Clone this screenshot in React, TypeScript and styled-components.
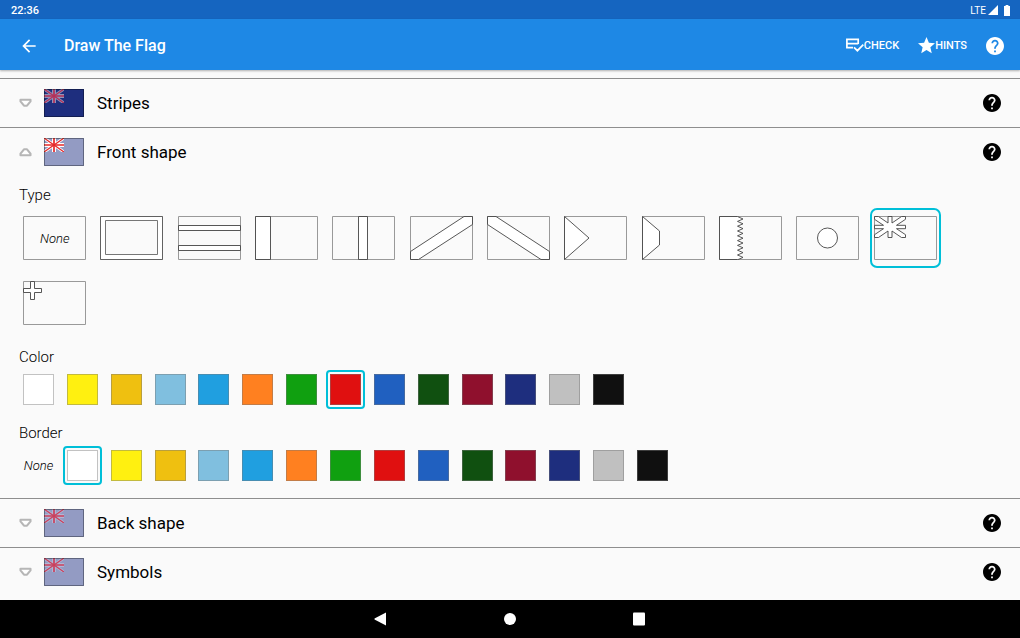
import React, { useState } from 'react';
import styled, { createGlobalStyle } from 'styled-components';

const GlobalStyle = createGlobalStyle`
  * { box-sizing: border-box; }
  body {
    margin: 0;
    background: #fafafa;
    color: #000;
    font-family: Roboto, "Liberation Sans", sans-serif;
  }
  button, input { font: inherit; margin: 0; }
`;

const Screen = styled.div`
  display: flex;
  flex-direction: column;
  min-height: 100vh;
`;

const StatusBar = styled.div`
  display: flex;
  align-items: center;
  justify-content: space-between;
  height: 19px;
  padding: 1px 10px 0 11px;
  background: #1565c0;
  color: #fff;
  font-size: 11px;
  font-weight: 500;
`;

const StatusIcons = styled.div`
  display: flex;
  align-items: center;
  gap: 2px;
  font-size: 10px;
  font-weight: 400;
`;

const AppBar = styled.header`
  display: flex;
  align-items: center;
  height: 51px;
  padding: 2px 16px 0 19px;
  background: #1e88e5;
  color: #fff;
  box-shadow: 0 1px 2px rgba(0, 0, 0, 0.3);
  z-index: 1;
`;

const PlainButton = styled.button`
  display: flex;
  align-items: center;
  padding: 0;
  border: 0;
  background: none;
  color: inherit;
  cursor: pointer;
`;

const Title = styled.h1`
  flex: 1;
  margin: 0 0 0 25px;
  font-size: 16px;
  font-weight: 500;
`;

const Actions = styled.div`
  display: flex;
  align-items: center;
  gap: 19px;
  font-size: 11px;
  font-weight: 500;
`;

const Content = styled.main`
  flex: 1;
  padding-top: 8px;
`;

const SectionHeader = styled.div`
  display: flex;
  align-items: center;
  height: 49px;
  padding: 0 19px;
  border-top: 1px solid #8e8e8e;
  color: #000;
`;

const Toggle = styled(PlainButton)`
  flex: 1;
  height: 48px;
  gap: 12px;
  text-align: left;
`;

const SectionTitle = styled.span`
  padding-left: 1px;
  font-size: 17px;
  font-weight: 400;
`;

const SectionBody = styled.div`
  display: flex;
  flex-direction: column;
  gap: 14px;
  padding: 9px 20px 13px 19px;
`;

const Group = styled.fieldset`
  margin: 0;
  padding: 0;
  border: 0;
  min-width: 0;
`;

const Legend = styled.legend`
  padding: 0;
  height: 23px;
  line-height: 20px;
  font-size: 15px;
  font-weight: 300;
`;

const TypeGrid = styled.div`
  display: grid;
  grid-template-columns: repeat(auto-fill, minmax(71px, 1fr));
  gap: 5px 6px;
  margin-right: 59px;
`;

const SwatchGrid = styled.div`
  display: grid;
  grid-template-columns: repeat(auto-fill, minmax(38px, 1fr));
  gap: 5px;
  max-width: 653px;
`;

const Choice = styled.label<{ $height: number }>`
  display: grid;
  place-items: center;
  height: ${(p) => p.$height}px;
  cursor: pointer;
  > * { grid-area: 1 / 1; }
`;

const Radio = styled.input`
  appearance: none;
  width: 100%;
  height: 100%;
  border-radius: ${(p) => (p.name === 'type' ? 7 : 4)}px;
  &:checked { border: 2px solid #00bfd8; }
`;

const Swatch = styled.span<{ $color: string }>`
  width: 31px;
  height: 31px;
  border: 1px solid rgba(120, 120, 120, 0.45);
  background: ${(p) => p.$color};
`;

const None = styled.span`
  font-size: 13px;
  font-style: italic;
  font-weight: 300;
`;

const NavBar = styled.nav`
  display: flex;
  align-items: center;
  justify-content: center;
  gap: 115px;
  height: 38px;
  background: #000;
  color: #fff;
`;

const colors: [string, string][] = [
  ['White', '#ffffff'], ['Yellow', '#fff010'], ['Gold', '#efc010'], ['Sky', '#80bfdf'],
  ['Azure', '#209fe0'], ['Orange', '#ff8020'], ['Green', '#10a010'], ['Red', '#e01010'],
  ['Blue', '#2060c0'], ['Dark green', '#105010'], ['Maroon', '#8f102d'], ['Navy', '#1e2e7e'],
  ['Silver', '#c0c0c0'], ['Black', '#101010'],
];

const zigzag = 'M18.5 .5' + Array.from({ length: 9 }, (_, i) =>
  `L24 ${3 + i * 4.8}L18.5 ${5.4 + i * 4.8}`).join('') + 'L18.5 43.5';

const union =
  'M0 0H4L13.5 6.5V0H17.5V6.5L27 0H31V2.8L22 8.8H31V12.2H22L31 18.2V21H27L17.5 14.5V21H13.5V14.5L4 21H0V18.2L9 12.2H0V8.8H9L0 2.8Z';

const types: { name: string; shape: React.ReactNode }[] = [
  { name: 'None', shape: null },
  { name: 'Frame', shape: <><path d="M.5 .5h62v43h-62z" stroke="#555" /><path d="M5.5 4.5h52v34h-52z" fill="#fafafa" stroke="#666" /></> },
  { name: 'Horizontal stripes', shape: <><path d="M.5 9.5h62v5h-62z" /><path d="M.5 29.5h62v5h-62z" /></> },
  { name: 'Side band', shape: <path d="M.5 .5h15v43h-15z" /> },
  { name: 'Middle band', shape: <path d="M26.5 .5h9v43h-9z" /> },
  { name: 'Rising diagonal', shape: <path d="M.5 35.5L54 .5h8.5V8.5L8.5 43.5h-8z" /> },
  { name: 'Falling diagonal', shape: <path d="M62.5 35.5L9 .5H.5V8.5L54 43.5h8.5z" /> },
  { name: 'Triangle', shape: <path d="M.5 .5L25 22L.5 43.5z" /> },
  { name: 'Trapezoid', shape: <path d="M.5 .5L17.5 15V29L.5 43.5z" /> },
  { name: 'Serrated', shape: <path d={`${zigzag}H.5V.5z`} /> },
  { name: 'Disc', shape: <circle cx="31.5" cy="22" r="10" /> },
  { name: 'Union canton', shape: <path d={union} transform="translate(.5 .5)" /> },
  { name: 'Cross canton', shape: <path d="M7.5 .5h4v7h7v4h-7v7h-4v-7h-7v-4h7z" /> },
];

function TypeIcon({ shape }: { shape: React.ReactNode }) {
  return (
    <svg width="63" height="44" viewBox="0 0 63 44" fill="none">
      <path d="M.5 .5h62v43h-62z" stroke="#999" />
      <g fill="#fff" stroke="#444" strokeWidth="0.9">{shape}</g>
    </svg>
  );
}

type FlagLook = 'navy' | 'bright' | 'faded';

function Flag({ look }: { look: FlagLook }) {
  const field = look === 'navy' ? '#1e2e7e' : '#939bc3';
  const white = { navy: '#8d93bb', bright: '#ffffff', faded: '#b0b5d4' }[look];
  const red = { navy: '#b53058', bright: '#e62a2a', faded: '#cb405c' }[look];
  return (
    <svg width="40" height="28" viewBox="0 0 40 28" fill="none">
      <path d="M0 0h40v28H0z" fill={field} />
      <svg width="20" height="14" viewBox="0 0 20 14">
        <path d="M0 0L20 14M20 0L0 14" stroke={white} strokeWidth="3" />
        <path d="M10 0V14M0 7H20" stroke={white} strokeWidth="4" />
        <path d="M0 0L20 14M20 0L0 14" stroke={red} strokeWidth="1.3" />
        <path d="M10 0V14M0 7H20" stroke={red} strokeWidth="1.7" />
      </svg>
      <path d="M.5 .5h39v27H.5z" stroke="#000" strokeOpacity="0.35" />
    </svg>
  );
}

function Arrow({ open }: { open: boolean }) {
  return (
    <svg width="13" height="10" viewBox="0 0 13 10">
      <path
        d={open ? 'M1.5 8.2h10V6.6L8 2.3H5L1.5 6.6z' : 'M1.5 1.8h10v1.6L8 7.7H5L1.5 3.4z'}
        fill="#fff" stroke="#b6b6b6" strokeWidth="2.1" strokeLinejoin="round"
      />
    </svg>
  );
}

function HelpIcon({ size }: { size: number }) {
  return (
    <svg width={size} height={size} viewBox="2 2 20 20" fill="currentColor">
      <path d="M12 2C6.48 2 2 6.48 2 12s4.48 10 10 10 10-4.48 10-10S17.52 2 12 2zm1 17h-2v-2h2v2zm2.07-7.75l-.9.92C13.45 12.9 13 13.5 13 15h-2v-.5c0-1.1.45-2.1 1.17-2.83l1.24-1.26c.37-.36.59-.86.59-1.41 0-1.1-.9-2-2-2s-2 .9-2 2H8c0-2.21 1.79-4 4-4s4 1.79 4 4c0 .88-.36 1.68-.93 2.25z" />
    </svg>
  );
}

function SectionBar({ title, look, open = false }: { title: string; look: FlagLook; open?: boolean }) {
  return (
    <SectionHeader>
      <Toggle type="button" aria-expanded={open}>
        <Arrow open={open} />
        <Flag look={look} />
        <SectionTitle>{title}</SectionTitle>
      </Toggle>
      <PlainButton type="button" aria-label={`Help: ${title}`}>
        <HelpIcon size={18} />
      </PlainButton>
    </SectionHeader>
  );
}

function ColorChoices({ name, initial, allowNone = false }: { name: string; initial: string; allowNone?: boolean }) {
  const [value, setValue] = useState(initial);
  return (
    <SwatchGrid>
      {allowNone && (
        <Choice $height={39}>
          <Radio type="radio" name={name} checked={value === 'None'} onChange={() => setValue('None')} />
          <None>None</None>
        </Choice>
      )}
      {colors.map(([label, color]) => (
        <Choice key={label} $height={39}>
          <Radio type="radio" name={name} aria-label={label} checked={value === label} onChange={() => setValue(label)} />
          <Swatch $color={color} />
        </Choice>
      ))}
    </SwatchGrid>
  );
}

export default function App() {
  const [type, setType] = useState('Union canton');
  return (
    <Screen>
      <GlobalStyle />
      <StatusBar>
        <span>22:36</span>
        <StatusIcons>
          <span>LTE</span>
          <svg width="10" height="10" viewBox="0 0 10 10" fill="#fff"><path d="M10 0V10H0z" /></svg>
          <svg width="10" height="11" viewBox="0 0 10 11" fill="#fff"><path d="M4 1h1.6V0h2.8v1H10v10H4V1z" /></svg>
        </StatusIcons>
      </StatusBar>
      <AppBar>
        <PlainButton type="button" aria-label="Back">
          <svg width="20" height="20" viewBox="0 0 24 24" fill="currentColor">
            <path d="M20 11H7.83l5.59-5.59L12 4l-8 8 8 8 1.41-1.41L7.83 13H20v-2z" />
          </svg>
        </PlainButton>
        <Title>Draw The Flag</Title>
        <Actions>
          <PlainButton type="button">
            <svg width="18" height="15" viewBox="0 0 18 15" fill="none" stroke="#fff" strokeWidth="1.7">
              <path d="M7 9.7H.9V1.4H12.2V6M1 5.6H12.2M8 9.3L11.4 12.7L17.3 6.6" />
            </svg>
            CHECK
          </PlainButton>
          <PlainButton type="button">
            <svg width="17" height="17" viewBox="2 2 20 20" fill="currentColor">
              <path d="M12 17.27L18.18 21l-1.64-7.03L22 9.24l-7.19-.61L12 2 9.19 8.63 2 9.24l5.46 4.73L5.82 21z" />
            </svg>
            HINTS
          </PlainButton>
          <PlainButton type="button" aria-label="Help">
            <HelpIcon size={18} />
          </PlainButton>
        </Actions>
      </AppBar>
      <Content>
        <SectionBar title="Stripes" look="navy" />
        <SectionBar title="Front shape" look="bright" open />
        <SectionBody>
          <Group>
            <Legend>Type</Legend>
            <TypeGrid>
              {types.map((t) => (
                <Choice key={t.name} $height={60}>
                  <Radio type="radio" name="type" aria-label={t.name} checked={type === t.name} onChange={() => setType(t.name)} />
                  <TypeIcon shape={t.shape} />
                  {t.shape === null && <None>None</None>}
                </Choice>
              ))}
            </TypeGrid>
          </Group>
          <Group>
            <Legend>Color</Legend>
            <ColorChoices name="color" initial="Red" />
          </Group>
          <Group>
            <Legend>Border</Legend>
            <ColorChoices name="border" initial="White" allowNone />
          </Group>
        </SectionBody>
        <SectionBar title="Back shape" look="faded" />
        <SectionBar title="Symbols" look="faded" />
      </Content>
      <NavBar>
        <PlainButton type="button" aria-label="Back">
          <svg width="14" height="14" viewBox="0 0 14 14" fill="currentColor"><path d="M12 .5v13L.5 7.5V6.500z" /></svg>
        </PlainButton>
        <PlainButton type="button" aria-label="Home">
          <svg width="14" height="14" viewBox="0 0 14 14" fill="currentColor"><circle cx="7" cy="7" r="6" /></svg>
        </PlainButton>
        <PlainButton type="button" aria-label="Recent apps">
          <svg width="14" height="14" viewBox="0 0 14 14" fill="currentColor"><rect x="1" y=".5" width="12" height="13" rx="1" /></svg>
        </PlainButton>
      </NavBar>
    </Screen>
  );
}
